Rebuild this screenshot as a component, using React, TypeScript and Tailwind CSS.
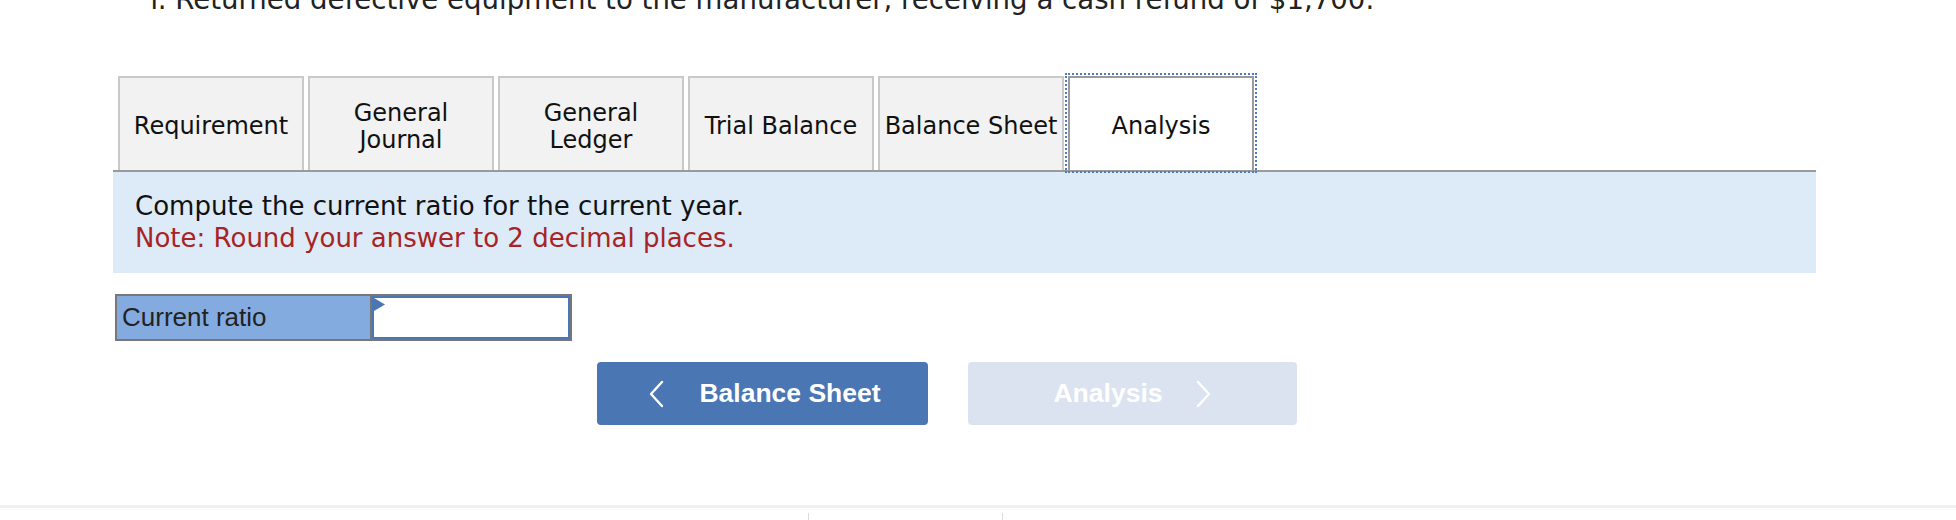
import React from "react";

const tabFont = { fontFamily: '"DejaVu Sans", Verdana, sans-serif' };

function Tab({ children, active }: { children: React.ReactNode; active?: boolean }) {
  if (active) {
    return (
      <div className="relative ml-[4px] w-[186px] h-[94px] pt-[6px] bg-white border-2 border-b-0 border-[#9a9a9a] flex items-center justify-center text-center text-[24px] leading-[27.5px] text-[#111] outline-2 outline-dotted outline-[#4f7ac7] outline-offset-[1px]">
        {children}
      </div>
    );
  }
  return (
    <div className="ml-[4px] first:ml-[5px] w-[186px] h-[94px] pt-[6px] bg-[#f2f2f2] border-2 border-b-0 border-[#c9c9c9] flex items-center justify-center text-center text-[24px] leading-[27.5px] text-[#111]">
      {children}
    </div>
  );
}

function Chevron({ dir, color }: { dir: "left" | "right"; color: string }) {
  return (
    <svg width="17" height="28" viewBox="0 0 17 28" fill="none">
      {dir === "left" ? (
        <polyline points="14,2 3,14 14,26" stroke={color} strokeWidth="2.4" strokeLinecap="round" strokeLinejoin="round" />
      ) : (
        <polyline points="3,2 14,14 3,26" stroke={color} strokeWidth="2.4" strokeLinecap="round" strokeLinejoin="round" />
      )}
    </svg>
  );
}

export default function App() {
  return (
    <div className="w-[1956px] h-[520px] bg-white overflow-hidden relative" style={tabFont}>
      <div className="h-[76px] flex flex-col">
        <div className="-mt-[16px] pl-[150px] text-[27.6px] leading-[32px] text-[#222] whitespace-nowrap">
          f. Returned defective equipment to the manufacturer, receiving a cash refund of $1,700.
        </div>
      </div>

      <div className="ml-[113px] w-[1703px]">
        <div className="flex items-end border-b-2 border-[#9a9a9a]">
          <Tab>Requirement</Tab>
          <Tab>
            General
            <br />
            Journal
          </Tab>
          <Tab>
            General
            <br />
            Ledger
          </Tab>
          <Tab>Trial Balance</Tab>
          <Tab>Balance Sheet</Tab>
          <Tab active>Analysis</Tab>
        </div>

        <div className="bg-[#ddeaf7] pt-[18px] pb-[19px] px-[22px] text-[26px] leading-[32px]">
          <div className="text-[#111]">Compute the current ratio for the current year.</div>
          <div className="text-[#a82424]">Note: Round your answer to 2 decimal places.</div>
        </div>

        <div
          className="mt-[21px] ml-[2px] flex w-[457px] h-[47px] border-2 border-[#777]"
          style={{ fontFamily: '"Liberation Sans", Arial, sans-serif' }}
        >
          <div className="w-[255px] bg-[#84abdf] border-r-2 border-[#777] flex items-center pl-[5px] text-[26px] text-[#222]">
            Current ratio
          </div>
          <div className="relative flex-1 bg-white border-2 border-[#4a76b4]">
            <svg className="absolute left-0 top-0" width="11" height="13" viewBox="0 0 11 13">
              <polygon points="0,0 11,6.5 0,13" fill="#4a76b4" />
            </svg>
          </div>
        </div>

        <div
          className="mt-[21px] ml-[484px] flex gap-[40px]"
          style={{ fontFamily: '"Liberation Sans", Arial, sans-serif' }}
        >
          <div className="w-[331px] h-[63px] rounded-[4px] bg-[#4a76b4] flex items-center justify-center gap-[34px] pl-[4px] text-white font-bold text-[26.5px]">
            <Chevron dir="left" color="#ffffff" />
            <span>Balance Sheet</span>
          </div>
          <div className="w-[329px] h-[63px] rounded-[4px] bg-[#dae3ef] flex items-center justify-center gap-[32px] text-white font-bold text-[26.5px]">
            <span>Analysis</span>
            <Chevron dir="right" color="#ffffff" />
          </div>
        </div>
      </div>

      <div className="mt-[80px] h-[3px] w-full bg-[#f0f0f0]" />
      <div className="relative h-[15px]">
        <div className="absolute left-[808px] top-[5px] w-px h-[10px] bg-[#dcdcdc]" />
        <div className="absolute left-[1002px] top-[5px] w-px h-[10px] bg-[#dcdcdc]" />
      </div>
    </div>
  );
}
